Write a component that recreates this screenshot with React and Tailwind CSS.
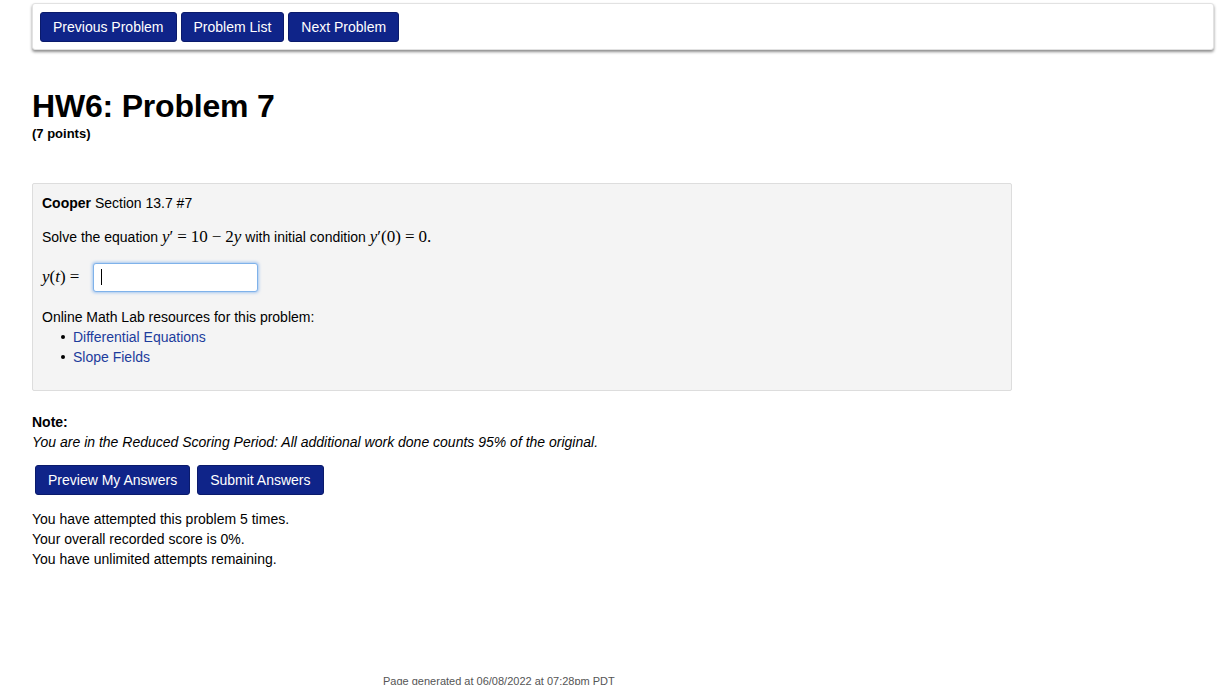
import React from 'react';

const SANS = "font-['Liberation_Sans',Arial,sans-serif]";
const MATH = "font-['Liberation_Serif','DejaVu_Serif',serif]";

function NavButton({ children }) {
  return (
    <button className="h-[30px] px-[12px] rounded-[3px] bg-[#0f2489] border border-[#0a1a6b] text-white text-[14px] leading-none">
      {children}
    </button>
  );
}

function M({ children }) {
  return <span className={`${MATH} text-[17px]`}>{children}</span>;
}

// relation / binary operator with TeX-like spacing
function Op({ children }) {
  return <span className="mx-[4px]">{children}</span>;
}

export default function App() {
  return (
    <div className={`${SANS} bg-white text-black text-[14px] min-h-[685px] relative overflow-hidden`}>
      {/* top nav */}
      <div className="ml-[32px] mr-[7px] mt-[3px] h-[47px] bg-white border border-[#e2e2e2] rounded-[3px] shadow-[0_2px_3px_rgba(0,0,0,0.45)] flex items-center gap-[4px] pl-[7px]">
        <NavButton>Previous Problem</NavButton>
        <NavButton>Problem List</NavButton>
        <NavButton>Next Problem</NavButton>
      </div>

      <div className="pl-[32px] w-[1012px]">
        <h1 className="mt-[36px] text-[32px] font-bold leading-[40px] tracking-[-0.2px]">HW6: Problem 7</h1>
        <div className="text-[13px] font-bold leading-[16px]">(7 points)</div>

        {/* problem box */}
        <div className="mt-[41px] bg-[#f4f4f4] border border-[#dddddd] rounded-[2px] px-[9px] pt-[9px] h-[208px]">
          <div className="leading-[20px]"><b>Cooper</b> Section 13.7 #7</div>
          <div className="mt-[14px] leading-[20px]">
            Solve the equation <M><i>y</i>′<Op>=</Op>10<Op>−</Op>2<i>y</i></M> with initial condition <M><i>y</i>′(0)<Op>=</Op>0.</M>
          </div>
          <div className="mt-[15px] flex items-center h-[30px]">
            <M><i>y</i>(<i>t</i>)<Op>=</Op></M>
            <div className="ml-[10px] w-[165px] h-[29px] bg-white border border-[#7fb2ea] rounded-[3px] shadow-[0_0_3px_1px_rgba(100,160,235,0.55)] flex items-center pl-[7px]">
              <span className="w-px h-[16px] bg-black" />
            </div>
          </div>
          <div className="mt-[15px] leading-[20px]">Online Math Lab resources for this problem:</div>
          <ul className="leading-[20px]">
            <li className="flex items-center">
              <span className="w-[31px] pl-[19px]"><span className="block w-[4px] h-[4px] rounded-full bg-black" /></span>
              <span className="text-[#1c3c9c]">Differential Equations</span>
            </li>
            <li className="flex items-center">
              <span className="w-[31px] pl-[19px]"><span className="block w-[4px] h-[4px] rounded-full bg-black" /></span>
              <span className="text-[#1c3c9c]">Slope Fields</span>
            </li>
          </ul>
        </div>

        <div className="mt-[21px] font-bold leading-[20px]">Note:</div>
        <div className="italic text-[14px] leading-[20px]">You are in the Reduced Scoring Period: All additional work done counts 95% of the original.</div>

        <div className="mt-[13px] ml-[3px] flex gap-[7px]">
          <NavButton>Preview My Answers</NavButton>
          <NavButton>Submit Answers</NavButton>
        </div>

        <div className="mt-[14px] leading-[20px]">
          <div>You have attempted this problem 5 times.</div>
          <div>Your overall recorded score is 0%.</div>
          <div>You have unlimited attempts remaining.</div>
        </div>
      </div>

      <div className="mt-[105px] pl-[383px] text-[11px] text-[#555] leading-[14px]">
        Page generated at 06/08/2022 at 07:28pm PDT
      </div>
    </div>
  );
}
